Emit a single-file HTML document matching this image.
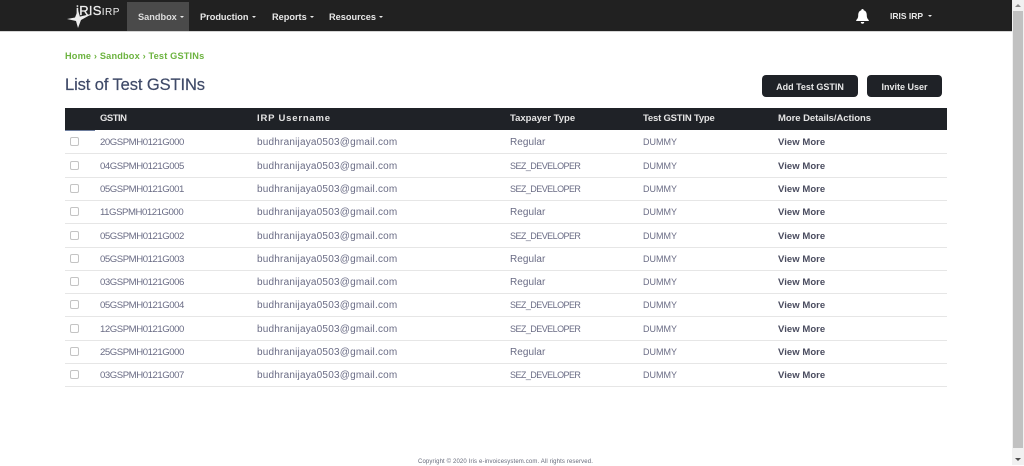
<!DOCTYPE html>
<html><head><meta charset="utf-8"><title>List of Test GSTINs</title>
<style>
html,body{margin:0;padding:0;width:1024px;height:465px;overflow:hidden;background:#fff;font-family:"Liberation Sans",sans-serif}
.a{position:absolute;white-space:nowrap}
nav{position:absolute;left:0;top:0;width:1012px;height:31px;background:#212121;border-bottom:1px solid #d5d5d5}
.active{position:absolute;left:127px;top:2px;width:62px;height:29px;background:#4a4a4a}
.n{color:#e8e8e8;font-size:9.2px;font-weight:bold;top:11px;line-height:12px;letter-spacing:0}
.c{display:inline-block;width:0;height:0;border-left:2px solid transparent;border-right:2px solid transparent;border-top:2.5px solid #e8e8e8;margin-left:3px;vertical-align:2px}
.btn{position:absolute;top:75px;height:22px;background:#1f2227;border-radius:4px;color:#e8e8e8;font-size:9px;font-weight:bold;text-align:center;line-height:24px;letter-spacing:0}
.th{position:absolute;left:65px;top:108px;width:882px;height:22px;background:#1f2227}
.h{color:#e4e4e4;font-size:9.5px;font-weight:bold;top:113px;line-height:12px}
.r{position:absolute;left:65px;width:882px;height:23px;border-bottom:1px solid #e6e6e6}
.r span{position:absolute;top:6px;font-size:10px;line-height:13px;color:#6a6c85;white-space:nowrap}
.r i{position:absolute;left:5px;top:7px;width:7px;height:7px;border:1px solid #c4c4c4;border-radius:2px;background:#fff}
.r .g{left:35px;font-size:9.6px;letter-spacing:-.45px}
.r .u{left:192px;letter-spacing:.2px}
.r .t{left:445px;letter-spacing:.05px}
.r .z{left:445px;font-size:9px;letter-spacing:-.55px}
.r .d{left:578px;font-size:9px}
.r .v{left:713px;color:#4a4c5f;font-weight:bold;font-size:9.5px;letter-spacing:.05px}
</style></head><body>
<nav></nav><div class="active"></div>
<svg class="a" style="left:66px;top:4px" width="58" height="24" viewBox="0 0 58 24"><path d="M1 15 L9 13.5 L12 6 L14 13 L24 11 L15 16 L12 24 L10 17 Z" fill="#eee"/><path d="M12 13 L25 10 L25 11 L14 14Z" fill="#eee"/></svg>
<div class="a" style="left:76px;top:4px;color:#eee;font-size:13px;line-height:14px;letter-spacing:.3px;-webkit-text-stroke:.3px #eee">iRIS<span style="font-size:10px;letter-spacing:.5px;-webkit-text-stroke:0">IRP</span></div>
<div class="a n" style="left:138px;color:#ddd">Sandbox<span class="c"></span></div>
<div class="a n" style="left:200px">Production<span class="c"></span></div>
<div class="a n" style="left:272px">Reports<span class="c"></span></div>
<div class="a n" style="left:329px">Resources<span class="c"></span></div>
<svg class="a" style="left:856px;top:9px" width="13" height="15" viewBox="0 0 13 15"><path d="M6.500 0a1.200 1.200 0 0 1 1.200 1.300C10 2 10.800 4 10.800 6.500c0 2.500 1 3.500 2 4.700V12H.2v-.8c1-1.200 2-2.200 2-4.700 0-2.500.8-4.500 3.100-5.200A1.200 1.200 0 0 1 6.500 0zM4.800 13h3.400a1.700 1.700 0 0 1-3.400 0z" fill="#fff"/></svg>
<div class="a n" style="left:890px;top:10px;font-size:8.500px">IRIS IRP<span class="c" style="margin-left:5px"></span></div>
<div class="a" style="left:65px;top:50px;color:#6cb33f;font-size:9.200px;font-weight:bold;line-height:12px;letter-spacing:.17px">Home &rsaquo; Sandbox &rsaquo; Test GSTINs</div>
<div class="a" style="left:65px;top:75px;color:#3f4a68;font-size:16.500px;line-height:20px;letter-spacing:-.1px;-webkit-text-stroke:.2px #3f4a68">List of Test GSTINs</div>
<div class="btn" style="left:762px;width:96px">Add Test GSTIN</div>
<div class="btn" style="left:867px;width:75px">Invite User</div>
<div class="th"></div>
<div class="a" style="left:65px;top:130px;width:30px;height:1px;background:#6f7f9f"></div>
<div class="a h" style="left:100px;letter-spacing:-.5px">GSTIN</div>
<div class="a h" style="left:257px;letter-spacing:.8px">IRP Username</div>
<div class="a h" style="left:510px;letter-spacing:0">Taxpayer Type</div>
<div class="a h" style="left:643px;letter-spacing:-.2px">Test GSTIN Type</div>
<div class="a h" style="left:778px;letter-spacing:-.05px">More Details/Actions</div>
<div class="r" style="top:130px"><i></i><span class="g">20GSPMH0121G000</span><span class="u">budhranijaya0503@gmail.com</span><span class="t">Regular</span><span class="d">DUMMY</span><span class="v">View More</span></div>
<div class="r" style="top:154px"><i></i><span class="g">04GSPMH0121G005</span><span class="u">budhranijaya0503@gmail.com</span><span class="z">SEZ_DEVELOPER</span><span class="d">DUMMY</span><span class="v">View More</span></div>
<div class="r" style="top:177px"><i></i><span class="g">05GSPMH0121G001</span><span class="u">budhranijaya0503@gmail.com</span><span class="z">SEZ_DEVELOPER</span><span class="d">DUMMY</span><span class="v">View More</span></div>
<div class="r" style="top:200px"><i></i><span class="g">11GSPMH0121G000</span><span class="u">budhranijaya0503@gmail.com</span><span class="t">Regular</span><span class="d">DUMMY</span><span class="v">View More</span></div>
<div class="r" style="top:224px"><i></i><span class="g">05GSPMH0121G002</span><span class="u">budhranijaya0503@gmail.com</span><span class="z">SEZ_DEVELOPER</span><span class="d">DUMMY</span><span class="v">View More</span></div>
<div class="r" style="top:247px"><i></i><span class="g">05GSPMH0121G003</span><span class="u">budhranijaya0503@gmail.com</span><span class="t">Regular</span><span class="d">DUMMY</span><span class="v">View More</span></div>
<div class="r" style="top:270px"><i></i><span class="g">03GSPMH0121G006</span><span class="u">budhranijaya0503@gmail.com</span><span class="t">Regular</span><span class="d">DUMMY</span><span class="v">View More</span></div>
<div class="r" style="top:293px"><i></i><span class="g">05GSPMH0121G004</span><span class="u">budhranijaya0503@gmail.com</span><span class="z">SEZ_DEVELOPER</span><span class="d">DUMMY</span><span class="v">View More</span></div>
<div class="r" style="top:317px"><i></i><span class="g">12GSPMH0121G000</span><span class="u">budhranijaya0503@gmail.com</span><span class="z">SEZ_DEVELOPER</span><span class="d">DUMMY</span><span class="v">View More</span></div>
<div class="r" style="top:340px"><i></i><span class="g">25GSPMH0121G000</span><span class="u">budhranijaya0503@gmail.com</span><span class="t">Regular</span><span class="d">DUMMY</span><span class="v">View More</span></div>
<div class="r" style="top:363px"><i></i><span class="g">03GSPMH0121G007</span><span class="u">budhranijaya0503@gmail.com</span><span class="z">SEZ_DEVELOPER</span><span class="d">DUMMY</span><span class="v">View More</span></div>
<div class="a" style="left:418px;top:458px;color:#666a7a;font-size:6px;line-height:8px;letter-spacing:.13px">Copyright &copy; 2020 Iris e-invoicesystem.com. All rights reserved.</div>
<div class="a" style="left:1012px;top:0;width:12px;height:465px;background:#f1f1f1"></div>
<div class="a" style="left:1013px;top:11px;width:10px;height:437px;background:#c1c1c1"></div>
<div class="a" style="left:1015px;top:4px;width:0;height:0;border-left:3px solid transparent;border-right:3px solid transparent;border-bottom:3px solid #8a8a8a"></div>
<div class="a" style="left:1015px;top:458px;width:0;height:0;border-left:3px solid transparent;border-right:3px solid transparent;border-top:3px solid #505050"></div>
</body></html>
